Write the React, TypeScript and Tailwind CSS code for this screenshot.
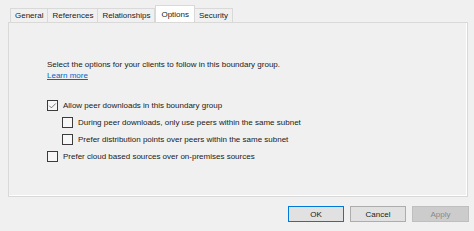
import { Check } from "lucide-react";

const tabs = ["General", "References", "Relationships", "Options", "Security"];

function Box({ checked }: { checked?: boolean }) {
  return (
    <span className="flex h-[11px] w-[11px] shrink-0 items-center justify-center border border-[#3c3c3c] bg-[#f7f7f7]">
      {checked && <Check size={10} strokeWidth={1.6} className="text-[#222]" />}
    </span>
  );
}

function Option({ label, checked, indent }: { label: string; checked?: boolean; indent?: boolean }) {
  return (
    <div className={`flex h-[13px] items-center gap-[5px] ${indent ? "pl-[15px]" : ""}`}>
      <Box checked={checked} />
      <span>{label}</span>
    </div>
  );
}

export default function App() {
  return (
    <div
      className="flex h-[231px] w-[474px] flex-col bg-[#f0f0f0] text-[8px] leading-[11px] text-[#1a1a1a]"
      style={{ fontFamily: '"Liberation Sans", Arial, sans-serif' }}
    >
      <div className="flex h-[22px] items-end pl-[10px]">
        {tabs.map((t) =>
          t === "Options" ? (
            <div
              key={t}
              className="-mb-px flex h-[18px] items-start border border-b-0 border-[#d9d9d9] bg-white px-[5px] pt-[3px]"
            >
              {t}
            </div>
          ) : (
            <div
              key={t}
              className="flex h-[14px] items-center border border-b-0 border-l-0 border-[#d9d9d9] bg-[#f0f0f0] px-[4px] first:border-l"
            >
              {t}
            </div>
          )
        )}
      </div>
      <div className="ml-[8px] mr-[6px] h-[175px] border border-[#d9d9d9] bg-[#f0f0f0] shadow-[inset_-1px_-1px_0_#ffffff]">
        <div className="pl-[38px] pt-[36px]">
          <p>Select the options for your clients to follow in this boundary group.</p>
          <p className="text-[#0066cc] underline">Learn more</p>
          <div className="mt-[18px] flex flex-col gap-[4px]">
            <Option label="Allow peer downloads in this boundary group" checked />
            <Option label="During peer downloads, only use peers within the same subnet" indent />
            <Option label="Prefer distribution points over peers within the same subnet" indent />
            <Option label="Prefer cloud based sources over on-premises sources" />
          </div>
        </div>
      </div>
      <div className="mt-[9px] flex justify-end gap-[6px] pr-[5px]">
        <button className="h-[16px] w-[56px] border border-[#0078d7] bg-[#e1e1e1]">OK</button>
        <button className="h-[16px] w-[56px] border border-[#adadad] bg-[#e1e1e1]">Cancel</button>
        <button className="h-[16px] w-[57px] border border-[#bfbfbf] bg-[#cccccc] text-[#8a8a8a]">Apply</button>
      </div>
    </div>
  );
}
